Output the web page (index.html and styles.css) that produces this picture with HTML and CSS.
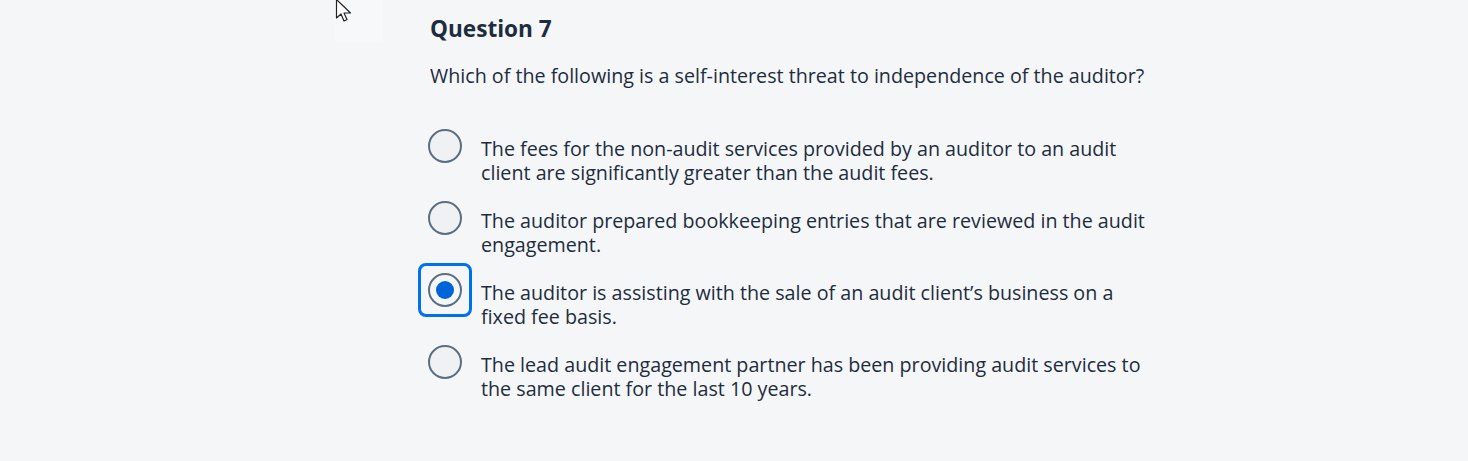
FILE: index.html
```html
<!DOCTYPE html>
<html lang="en">
<head>
<meta charset="utf-8">
<title>Question 7</title>
<link rel="stylesheet" href="styles.css">
</head>
<body>
<div class="cursor-box">
  <svg class="cursor" width="20" height="26" viewBox="0 0 20 26"><path d="M1.5 0.5 L1.5 19 L6 15 L9 22 L12 20.5 L9 14 L15.5 14 Z" fill="#fff" stroke="#222" stroke-width="1.2" stroke-linejoin="round"/></svg>
</div>
<main class="quiz">
  <h2 class="title">Question 7</h2>
  <p class="prompt">Which of the following is a self-interest threat to independence of the auditor?</p>
  <div class="options">
    <label class="option">
      <span class="radio"><span class="circle"></span></span>
      <span class="text">The fees for the non-audit services provided by an auditor to an audit client are significantly greater than the audit fees.</span>
    </label>
    <label class="option">
      <span class="radio"><span class="circle"></span></span>
      <span class="text">The auditor prepared bookkeeping entries that are reviewed in the audit engagement.</span>
    </label>
    <label class="option selected">
      <span class="radio"><span class="circle"><span class="dot"></span></span></span>
      <span class="text">The auditor is assisting with the sale of an audit client’s business on a fixed fee basis.</span>
    </label>
    <label class="option">
      <span class="radio"><span class="circle"></span></span>
      <span class="text">The lead audit engagement partner has been providing audit services to the same client for the last 10 years.</span>
    </label>
  </div>
</main>
</body>
</html>
```
FILE: styles.css
```css
html, body {
  margin: 0;
  padding: 0;
  background: #f5f6f7;
}
body {
  font-family: "Open Sans", "Noto Sans", sans-serif;
  color: #1d2d3e;
  position: relative;
  height: 461px;
  overflow: hidden;
}
.cursor-box {
  position: absolute;
  left: 335px;
  top: 0;
  width: 48px;
  height: 43px;
  background: #f7f8f9;
}
.cursor {
  position: absolute;
  left: 0;
  top: -1px;
}
.quiz {
  margin-left: 430px;
  padding-top: 14px;
  width: 740px;
}
.title {
  margin: 0;
  font-size: 22.6px;
  font-weight: 700;
  line-height: 30px;
}
.prompt {
  margin: 20px 0 0;
  font-size: 19.7px;
  line-height: 24px;
}
.options {
  margin-top: 49px;
  display: flex;
  flex-direction: column;
  gap: 24px;
}
.option {
  display: flex;
  align-items: flex-start;
  gap: 17px;
  margin-left: -12px;
  font-size: 19.7px;
  line-height: 24px;
}
.radio {
  width: 54px;
  height: 54px;
  box-sizing: border-box;
  border: 3px solid transparent;
  border-radius: 8px;
  display: flex;
  align-items: center;
  justify-content: center;
  flex: none;
  margin-top: -18px;
  margin-right: -8px;
}
.option.selected .radio {
  border-color: #0070f2;
}
.circle {
  width: 34px;
  height: 34px;
  box-sizing: border-box;
  border-radius: 50%;
  border: 2px solid #5b6f84;
  background: #eff1f2;
  display: flex;
  align-items: center;
  justify-content: center;
}
.selected .circle {
  background: #f5f6f7;
}
.dot {
  width: 18px;
  height: 18px;
  border-radius: 50%;
  background: #0064d9;
}
.text {
  width: 670px;
}
```
